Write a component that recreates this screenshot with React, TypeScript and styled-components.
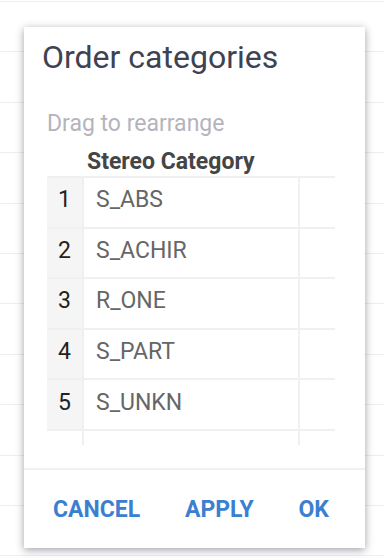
import React from "react";
import styled, { createGlobalStyle } from "styled-components";

const categories = ["S_ABS", "S_ACHIR", "R_ONE", "S_PART", "S_UNKN"];

const App = () => {
  return (
    <Page>
      <GlobalStyle />
      <Backdrop>
        {Array.from({ length: 12 }).map((_, i) => (
          <BackRow key={i} />
        ))}
      </Backdrop>
      <Dialog>
        <Title>Order categories</Title>
        <Body>
          <Hint>Drag to rearrange</Hint>
          <HeaderRow>
            <HeadIndex />
            <HeadCell>Stereo Category</HeadCell>
          </HeaderRow>
          <Grid>
            {categories.map((c, i) => (
              <Row key={c}>
                <Index>{i + 1}</Index>
                <Cell>{c}</Cell>
                <Extra />
              </Row>
            ))}
            <Row>
              <Index $empty />
              <Cell />
              <Extra />
            </Row>
          </Grid>
        </Body>
        <Footer>
          <Action>Cancel</Action>
          <Action>Apply</Action>
          <Action>OK</Action>
        </Footer>
      </Dialog>
    </Page>
  );
};

export default App;

const GlobalStyle = createGlobalStyle`
  html, body {
    margin: 0;
    padding: 0;
    background: #fff;
    font-family: Roboto, "Liberation Sans", sans-serif;
  }
`;

const Page = styled.div`
  position: relative;
  width: 384px;
  height: 560px;
  overflow: hidden;
`;

const Backdrop = styled.div`
  display: flex;
  flex-direction: column;
  padding-top: 1px;
`;

const BackRow = styled.div`
  height: 50.4px;
  box-sizing: border-box;
  border-top: 1px solid #eeeeee;
  flex-shrink: 0;
`;

const Dialog = styled.div`
  position: absolute;
  top: 27px;
  left: 24px;
  width: 341px;
  height: 521px;
  background: #fff;
  box-shadow: 0 2px 8px rgba(40, 44, 60, 0.45);
  display: flex;
  flex-direction: column;
`;

const Title = styled.div`
  font-size: 32px;
  color: #3e4251;
  padding: 10px 0 0 18px;
  line-height: 40px;
`;

const Body = styled.div`
  padding: 33px 30px 0 23px;
  flex: 1;
`;

const Hint = styled.div`
  font-size: 23px;
  color: #b4b4bc;
  line-height: 28px;
`;

const HeaderRow = styled.div`
  display: grid;
  grid-template-columns: 37px 1fr;
  margin-top: 10px;
  border-bottom: 2px solid #f0f0f0;
`;

const HeadIndex = styled.div``;

const HeadCell = styled.div`
  font-size: 23px;
  font-weight: 700;
  color: #454545;
  padding-left: 3px;
  line-height: 28px;
`;

const Grid = styled.div`
  height: 267px;
  overflow: hidden;
`;

const Row = styled.div`
  display: grid;
  grid-template-columns: 37px 216px 1fr;
  height: 50.6px;
  box-sizing: border-box;
  border-bottom: 2px solid #f0f0f0;
`;

const Index = styled.div<{ $empty?: boolean }>`
  background: ${(p) => (p.$empty ? "#fff" : "#f5f5f5")};
  border-right: 2px solid #f0f0f0;
  font-size: 23px;
  color: #222;
  display: flex;
  align-items: center;
  justify-content: flex-end;
  padding: 0 11px 5px 0;
`;

const Cell = styled.div`
  font-size: 23px;
  color: #666;
  display: flex;
  align-items: center;
  padding: 0 0 5px 12px;
  border-right: 2px solid #f0f0f0;
`;

const Extra = styled.div``;

const Footer = styled.div`
  margin-top: 23px;
  border-top: 2px solid #f0f0f0;
  height: 80px;
  box-sizing: border-box;
  display: flex;
  align-items: center;
  justify-content: space-between;
  padding: 0 36px 0 29px;
`;

const Action = styled.button`
  background: none;
  border: none;
  padding: 0;
  font-family: Roboto, "Liberation Sans", sans-serif;
  font-size: 23px;
  font-weight: 700;
  text-transform: uppercase;
  color: #3b80d0;
  cursor: pointer;
`;
